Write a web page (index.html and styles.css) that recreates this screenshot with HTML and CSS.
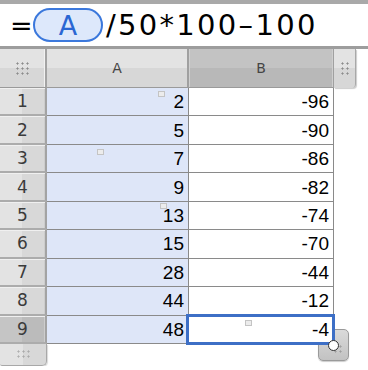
FILE: index.html
```html
<!DOCTYPE html>
<html lang="en">
<head>
    <meta charset="UTF-8">
    <meta name="viewport" content="width=device-width, initial-scale=1.0">
    <title>Formula</title>
    <link rel="stylesheet" href="styles.css">
</head>
<body>
    <div class="formula-bar">
        <span class="eq">=</span>
        <span class="ref">A</span>
        <span class="expr">/50*100–100</span>
    </div>

    <div class="sheet">
        <div class="corner"><span class="dots dots-3x3"></span></div>
        <div class="col-head">A</div>
        <div class="col-head selected">B</div>
        <div class="col-end"><span class="dots dots-2x3"></span></div>

        <div class="row-head">1</div><div class="cell a"><span class="mark mark-1"></span>2</div><div class="cell">-96</div>
        <div class="row-head">2</div><div class="cell a">5</div><div class="cell">-90</div>
        <div class="row-head">3</div><div class="cell a"><span class="mark mark-2"></span>7</div><div class="cell">-86</div>
        <div class="row-head">4</div><div class="cell a">9</div><div class="cell">-82</div>
        <div class="row-head">5</div><div class="cell a"><span class="mark mark-3"></span>13</div><div class="cell">-74</div>
        <div class="row-head">6</div><div class="cell a">15</div><div class="cell">-70</div>
        <div class="row-head">7</div><div class="cell a">28</div><div class="cell">-44</div>
        <div class="row-head">8</div><div class="cell a">44</div><div class="cell">-12</div>
        <div class="row-head selected">9</div><div class="cell a">48</div>
        <div class="cell current">
            <span class="mark mark-4"></span>-4
            <span class="fill-handle"><span class="dots dots-2x2"></span></span>
            <span class="outline"></span>
            <span class="knob"></span>
        </div>

        <div class="row-end"><span class="dots dots-3x2"></span></div>
    </div>
</body>
</html>
```

FILE: styles.css
```css
body {
    margin: 0;
    background-color: #fff;
    font-family: "Liberation Sans", Arial, sans-serif;
}

/* formula bar */
.formula-bar {
    height: 42px;
    border-top: 4px solid #a9a9a9;
    border-bottom: 3px solid #9d9d9d;
    display: flex;
    align-items: center;
    padding-left: 10px;
    font-family: "DejaVu Sans", sans-serif;
    font-size: 27px;
    color: #000;
}
.eq {
    width: 23px;
}
.ref {
    box-sizing: border-box;
    width: 70px;
    height: 34px;
    border: 2px solid #3b78dc;
    border-radius: 17px;
    background-color: #dde8fb;
    color: #2a66d3;
    display: flex;
    justify-content: center;
    align-items: center;
    font-size: 27px;
}
.expr {
    margin-left: 3px;
    font-size: 29px;
    letter-spacing: 2.3px;
}

/* sheet */
.sheet {
    display: grid;
    grid-template-columns: 47px 142px 145px 22px;
    grid-template-rows: 39px repeat(9, 28.44px) 22px;
    color: #000;
}
.sheet > div {
    box-sizing: border-box;
}
.corner, .col-head, .col-end {
    background: linear-gradient(#e3e3e3 50%, #d7d7d7 50%);
    border-bottom: 1px solid #9a9a9a;
    display: flex;
    justify-content: center;
    align-items: center;
}
.corner {
    border-right: 2px solid #a3a3a3;
    box-shadow: inset -1px 0 0 #f2f2f2;
}
.col-head {
    font-family: "DejaVu Sans", sans-serif;
    font-size: 14px;
    color: #454545;
    border-right: 2px solid #a0a0a0;
}
.col-head.selected {
    background: linear-gradient(#c3c3c3 50%, #b8b8b8 50%);
    border-right-width: 1px;
    box-shadow: inset 1px 0 0 #d0d0d0, inset -1px 0 0 #cfcfcf;
}
.col-end {
    border-bottom: none;
    border-right: 1px solid #a8a8a8;
    border-bottom-right-radius: 4px;
    box-shadow: 1px 1px 1px rgba(0, 0, 0, 0.2);
}
.row-head {
    grid-column: 1;
    background: linear-gradient(to right, #e3e3e3 50%, #d8d8d8 50%);
    border-right: 2px solid #a3a3a3;
    border-bottom: 2px solid #acacac;
    box-shadow: inset 0 1px 0 #f0f0f0, inset -1px 0 0 #cdcdcd;
    font-family: "DejaVu Sans", sans-serif;
    font-size: 17px;
    color: #3b3b3b;
    display: flex;
    justify-content: center;
    align-items: center;
}
.row-head.selected {
    background: linear-gradient(to right, #c5c5c5 50%, #bbbbbb 50%);
}
.row-end {
    grid-column: 1;
    background: linear-gradient(to right, #e3e3e3 50%, #d8d8d8 50%);
    border-right: 1px solid #a8a8a8;
    border-bottom: 1px solid #a8a8a8;
    border-bottom-right-radius: 5px;
    border-bottom-left-radius: 2px;
    box-shadow: 1px 1px 1px rgba(0, 0, 0, 0.15);
    display: flex;
    justify-content: center;
    align-items: center;
}
.cell {
    position: relative;
    border-right: 1px solid #8a8a8a;
    border-bottom: 1px solid #8a8a8a;
    font-size: 19px;
    display: flex;
    justify-content: flex-end;
    align-items: center;
    padding-right: 4px;
    padding-top: 1px;
}
.cell.a {
    background-color: #dee6f8;
}
.cell.current {
    background-color: #fff;
}

/* grip dots */
.dots {
    display: block;
    background-image: radial-gradient(circle, #8c8c8c 0.9px, transparent 1.2px);
    background-size: 5px 5px;
}
.dots-3x3 {
    width: 15px;
    height: 15px;
}
.dots-2x3 {
    width: 10px;
    height: 15px;
}
.dots-3x2 {
    width: 15px;
    height: 10px;
    opacity: 0.6;
}
.dots-2x2 {
    width: 10px;
    height: 10px;
    opacity: 0.7;
}

/* tiny comment marks */
.mark {
    position: absolute;
    width: 5px;
    height: 4px;
    border: 1px solid #c4c4c4;
    background-color: #ececec;
}
.mark-1 { right: 23px; top: 3px; }
.mark-2 { left: 50px; top: 4px; }
.mark-3 { right: 21px; top: 1px; }
.mark-4 { left: 56px; top: 4px; }

/* selection */
.outline {
    position: absolute;
    left: -3px;
    top: -2px;
    right: -2px;
    bottom: -2px;
    border: 3px solid #3d6fc6;
}
.fill-handle {
    position: absolute;
    z-index: -1;
    left: 129px;
    top: 13px;
    width: 31px;
    height: 32px;
    box-sizing: border-box;
    border: 1px solid #9a9a9a;
    border-radius: 5px;
    background: linear-gradient(#dadada, #c2c2c2);
    box-shadow: 0 1px 1px rgba(0, 0, 0, 0.2);
    display: flex;
    justify-content: center;
    align-items: center;
    padding: 8px 0 0 8px;
}
.knob {
    position: absolute;
    left: 139px;
    top: 24px;
    width: 9px;
    height: 9px;
    border: 1.5px solid #333;
    border-radius: 50%;
    background-color: #fff;
}
```
